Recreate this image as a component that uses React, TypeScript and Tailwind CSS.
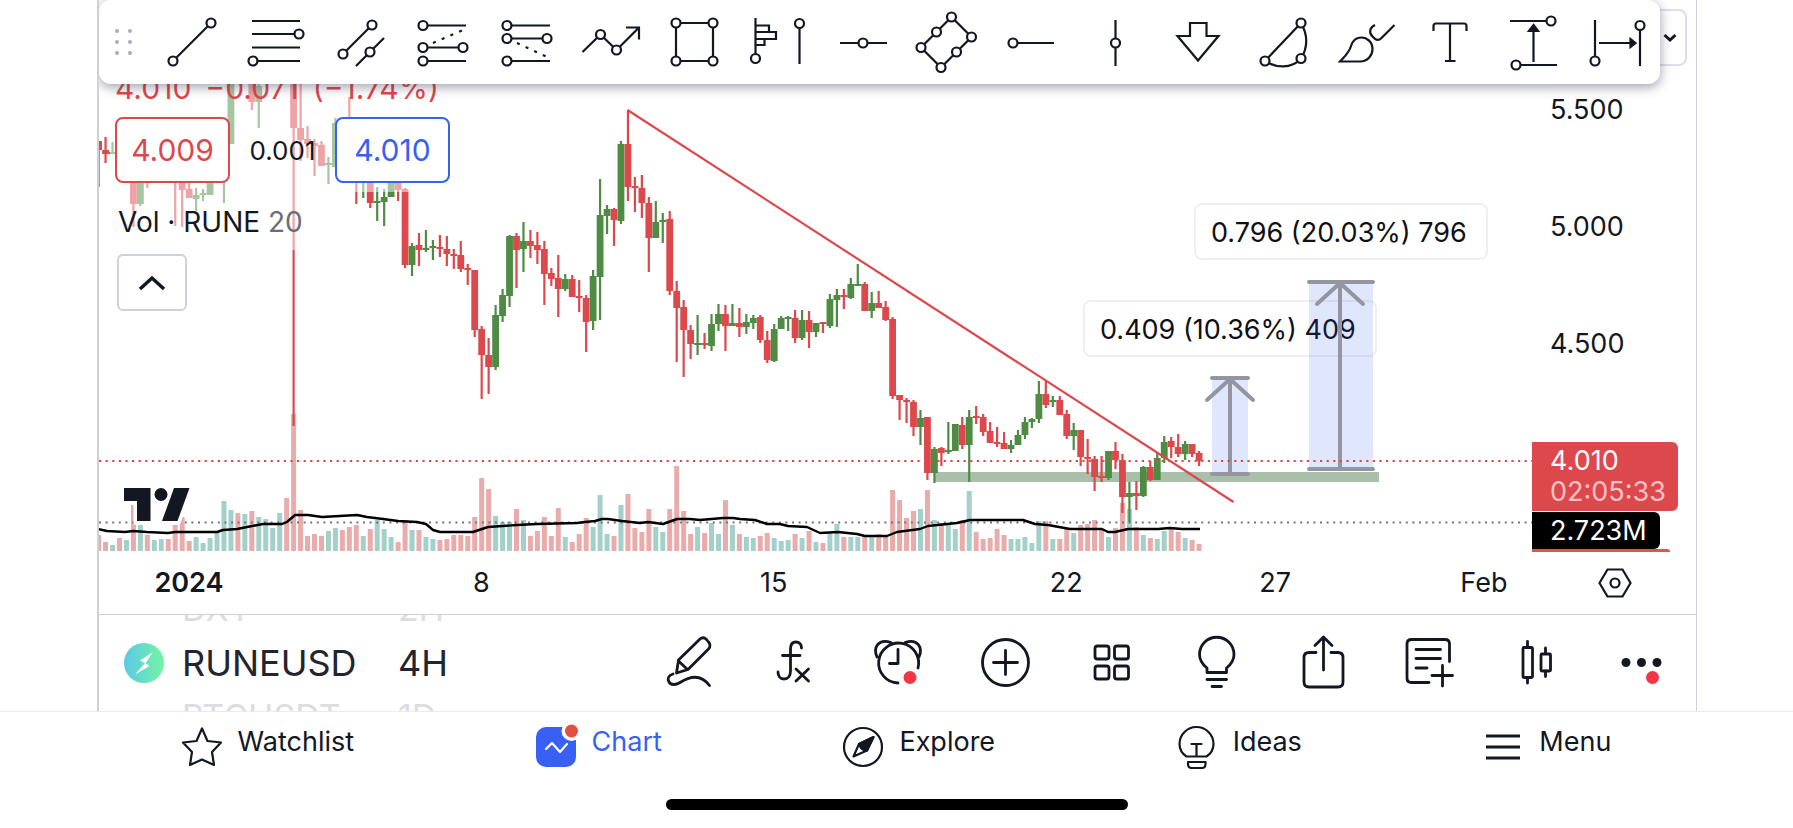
import type { ReactNode } from "react";

// [up, high, low, body top, body bottom, volume], one entry per 4h candle
type Candle = [number, number, number, number, number, number];

const candles: Candle[] = [
  [0, 141, 187, 141, 150, 16], [0, 137, 163, 150, 154, 9], [1, 142, 154, 152, 154, 6], [0, 148, 170, 152, 160, 13],
  [1, 140, 170, 150, 160, 11], [0, 150, 227, 158, 204, 46], [1, 150, 206, 158, 204, 26], [0, 140, 188, 152, 170, 16],
  [1, 145, 175, 155, 170, 11], [1, 140, 170, 150, 160, 12], [0, 140, 176, 150, 165, 12], [0, 150, 226, 160, 180, 26],
  [0, 160, 227, 170, 190, 34], [0, 180, 198, 189, 198, 10], [1, 188, 211, 195, 199, 14], [1, 189, 201, 193, 195, 8],
  [1, 170, 195, 180, 195, 13], [1, 150, 182, 160, 180, 19], [1, 130, 203, 140, 170, 50], [1, 60, 144, 60, 144, 41],
  [0, 50, 80, 60, 75, 38], [1, 50, 80, 60, 75, 37], [0, 60, 110, 70, 102, 40], [1, 60, 128, 86, 102, 34],
  [1, 50, 80, 60, 75, 32], [1, 40, 80, 50, 70, 23], [1, 40, 80, 50, 70, 38], [0, 40, 80, 50, 70, 53],
  [0, 60, 426, 70, 128, 137], [0, 83, 161, 128, 140, 41], [0, 126, 158, 139, 144, 15], [0, 139, 176, 143, 146, 17],
  [0, 141, 166, 145, 166, 15], [1, 157, 184, 163, 165, 20], [1, 118, 167, 123, 167, 23], [0, 122, 160, 125, 150, 21],
  [0, 97, 180, 140, 160, 24], [0, 150, 204, 160, 176, 26], [1, 150, 198, 160, 176, 15], [0, 170, 208, 178, 203, 22],
  [1, 187, 221, 201, 203, 31], [1, 189, 226, 197, 202, 22], [1, 175, 197, 180, 197, 14], [0, 176, 201, 180, 190, 9],
  [0, 188, 268, 189, 265, 31], [1, 243, 276, 246, 265, 21], [0, 233, 266, 245, 250, 21], [1, 230, 252, 248, 250, 14],
  [1, 240, 260, 246, 248, 12], [0, 235, 257, 247, 249, 11], [0, 236, 266, 249, 254, 12], [0, 249, 269, 254, 256, 16],
  [0, 241, 272, 255, 269, 16], [0, 264, 285, 268, 270, 15], [0, 270, 337, 270, 330, 34], [0, 326, 399, 329, 355, 73],
  [0, 338, 394, 355, 367, 62], [1, 305, 370, 315, 367, 35], [1, 289, 322, 295, 316, 29], [1, 235, 307, 236, 296, 29],
  [0, 233, 288, 236, 250, 42], [1, 222, 272, 241, 249, 31], [0, 230, 258, 241, 246, 15], [0, 232, 264, 245, 250, 20],
  [0, 241, 305, 249, 274, 34], [0, 268, 286, 273, 279, 15], [0, 255, 317, 278, 289, 43], [1, 274, 291, 279, 289, 14],
  [0, 275, 297, 279, 297, 9], [0, 280, 312, 296, 298, 17], [0, 295, 352, 298, 322, 33], [1, 270, 330, 276, 321, 24],
  [1, 179, 320, 215, 277, 56], [1, 205, 234, 209, 216, 17], [0, 208, 246, 209, 220, 15], [1, 141, 224, 144, 221, 46],
  [0, 110, 201, 144, 187, 57], [0, 177, 212, 186, 188, 23], [0, 175, 218, 188, 203, 19], [0, 197, 272, 203, 238, 42],
  [1, 201, 238, 222, 238, 24], [1, 213, 243, 220, 222, 19], [0, 211, 295, 219, 291, 42], [0, 281, 362, 291, 308, 85],
  [0, 300, 377, 307, 330, 40], [0, 325, 359, 330, 344, 17], [1, 315, 355, 343, 345, 24], [0, 333, 349, 343, 345, 18],
  [1, 314, 351, 324, 346, 28], [1, 304, 331, 314, 324, 17], [0, 305, 351, 314, 326, 51], [1, 304, 326, 323, 326, 26],
  [0, 308, 337, 323, 327, 17], [1, 314, 334, 322, 327, 14], [1, 315, 329, 318, 323, 13], [0, 315, 343, 317, 340, 15],
  [0, 331, 363, 340, 360, 18], [1, 324, 362, 329, 361, 13], [1, 316, 329, 318, 329, 10], [1, 316, 331, 317, 319, 11],
  [0, 310, 343, 318, 338, 17], [1, 310, 340, 320, 338, 13], [0, 311, 348, 320, 332, 20], [1, 323, 337, 323, 332, 9],
  [0, 322, 333, 322, 324, 8], [1, 294, 328, 299, 326, 18], [1, 289, 327, 295, 300, 27], [0, 289, 309, 295, 297, 14],
  [1, 278, 299, 284, 298, 14], [1, 264, 286, 284, 286, 14], [0, 282, 311, 284, 311, 16], [1, 292, 318, 303, 311, 14],
  [0, 291, 308, 303, 308, 17], [0, 301, 321, 307, 320, 14], [0, 317, 399, 319, 396, 61], [0, 395, 420, 395, 400, 51],
  [0, 398, 423, 400, 402, 33], [0, 400, 436, 402, 427, 40], [1, 410, 445, 418, 427, 42], [0, 417, 480, 417, 473, 61],
  [1, 447, 483, 449, 473, 31], [0, 447, 466, 448, 453, 28], [1, 422, 454, 450, 452, 27], [1, 424, 451, 424, 451, 22],
  [0, 417, 449, 425, 445, 31], [1, 410, 482, 417, 445, 60], [0, 406, 424, 416, 418, 19], [0, 414, 436, 417, 432, 12],
  [0, 422, 443, 431, 443, 13], [0, 427, 447, 442, 444, 22], [0, 432, 449, 443, 449, 16], [1, 440, 453, 445, 449, 12],
  [1, 430, 445, 435, 445, 12], [1, 417, 439, 422, 435, 14], [1, 418, 428, 419, 422, 8], [1, 381, 423, 394, 419, 30],
  [0, 381, 408, 394, 405, 30], [1, 396, 407, 400, 402, 12], [0, 396, 415, 400, 415, 12], [0, 410, 439, 414, 436, 22],
  [1, 423, 450, 430, 436, 18], [0, 430, 466, 430, 457, 26], [0, 439, 474, 457, 459, 27], [0, 456, 491, 459, 477, 31],
  [0, 456, 482, 476, 478, 22], [1, 451, 480, 451, 478, 14], [0, 442, 469, 451, 460, 23], [0, 454, 513, 460, 497, 48],
  [1, 482, 522, 493, 497, 42], [0, 481, 510, 493, 496, 24], [1, 466, 497, 467, 496, 16], [0, 461, 481, 467, 480, 13],
  [1, 453, 480, 458, 480, 12], [1, 436, 463, 442, 458, 20], [0, 437, 458, 441, 447, 22], [0, 434, 457, 447, 454, 19],
  [1, 441, 460, 444, 454, 13], [0, 444, 457, 444, 454, 11], [0, 451, 466, 453, 461, 7],
];

const candleX = (i: number) => 98.6 + i * 6.965;

const volumeAverage =
  "98,529 107,531 125,532 133,531 147,532 168,533 175,532 217,532 223,530 237,529 263,524 282,524 287,522 295,515 308,515 322,517 357,515 367,517 383,519 398,521 417,522 426,524 433,530 440,532 473,532 488,527 517,525 537,524 577,523 585,522 595,521 602,519 608,519 622,521 640,523 648,522 663,524 677,519 690,519 700,520 723,518 733,518 740,519 755,520 767,524 780,524 788,526 807,527 820,533 838,532 857,534 865,536 887,536 897,532 920,529 928,526 957,523 970,520 1023,520 1035,524 1048,525 1070,529 1102,529 1108,532 1115,532 1128,529 1158,529 1170,528 1182,529 1200,529";

function Ring({ x, y }: { x: number; y: number }) {
  return <circle cx={x} cy={y} r="4.5" fill="#fff" />;
}

const drawingTools: { name: string; art: ReactNode }[] = [
  { name: "Trend line", art: <><path d="M23 61 61 23" /><Ring x={23} y={61} /><Ring x={61} y={23} /></> },
  {
    name: "Fib retracement",
    art: <><path d="M18 21H66M18 34H65M18 47.5H66M19 61H66" /><Ring x={65} y={34} /><Ring x={19} y={61} /></>,
  },
  {
    name: "Parallel channel",
    art: <><path d="M25 54 54 25M38 66 66 38" /><Ring x={25} y={54} /><Ring x={54} y={25} /><Ring x={52} y={52} /></>,
  },
  {
    name: "Long position",
    art: (
      <>
        <path d="M21 25.5H64M21 47.5H60M21 61H64" />
        <path d="M31 43 61 30" strokeDasharray="3 6.5" />
        <Ring x={21} y={25.5} /><Ring x={21} y={47.5} /><Ring x={61} y={47.5} /><Ring x={21} y={61} />
      </>
    ),
  },
  {
    name: "Short position",
    art: (
      <>
        <path d="M21 25.5H64M21 38.5H60M21 61H64" />
        <path d="M31 43 61 57" strokeDasharray="3 6.5" />
        <Ring x={21} y={25.5} /><Ring x={21} y={38.5} /><Ring x={61} y={38.5} /><Ring x={21} y={61} />
      </>
    ),
  },
  {
    name: "Arrow path",
    art: <><path d="M13.5 52 31.5 34.5 47.5 50 70 27.5M57 27.5H70V39.5" /><Ring x={31.5} y={34.5} /><Ring x={47.5} y={50} /></>,
  },
  {
    name: "Rectangle",
    art: <><path d="M23 23H60V61H23Z" /><Ring x={23} y={23} /><Ring x={60} y={23} /><Ring x={23} y={61} /><Ring x={60} y={61} /></>,
  },
  {
    name: "Volume profile",
    art: (
      <>
        <path d="M18.5 18V54M18.5 25.5H32V32M18.5 32H39V39H18.5M27.5 39V45H18.5M62.5 28V64" />
        <Ring x={18.5} y={58.5} /><Ring x={62.5} y={23.5} />
      </>
    ),
  },
  { name: "Horizontal line", art: <><path d="M19 43H66" /><Ring x={42} y={43} /></> },
  {
    name: "Rotated rectangle",
    art: (
      <>
        <path d="M46.5 17 66.5 37 36 67.5 16 47.5Z" />
        <Ring x={46.5} y={17} /><Ring x={66.5} y={37} /><Ring x={51.5} y={52} /><Ring x={36} y={67.5} /><Ring x={16} y={47.5} /><Ring x={31.5} y={32} />
      </>
    ),
  },
  { name: "Horizontal ray", art: <><path d="M24 43H65" /><Ring x={24} y={43} /></> },
  { name: "Vertical line", art: <><path d="M42.5 20V66" /><Ring x={42.5} y={43} /></> },
  { name: "Arrow marker", art: <path d="M33 23H49.5V36H61.5L41 60.5 20.5 36H33Z" /> },
  {
    name: "Arc",
    art: <><path d="M24 61 60 23C67 35 67 47 60 59C50 69 35 68 24 61Z" /><Ring x={24} y={61} /><Ring x={60} y={23} /><Ring x={60} y={58.5} /></>,
  },
  {
    name: "Brush",
    art: <path d="M16 61.5H36C44 61.5 48.5 55 48.5 49C48.5 42 43 37.5 37.5 37.5C32 37.5 28.5 41 27 46C25 53 21 56 16 61.5ZM51 25C45 28 45 33 48.5 36.5C52 40.5 54.5 41 57.5 38L70.5 25" />,
  },
  { name: "Text", art: <path d="M25.5 31V26Q25.5 23.5 28 23.5H56Q58.5 23.5 58.5 26V31M42 23.5V61M37 61H47.5" /> },
  {
    name: "Price range",
    art: (
      <>
        <path d="M18 21H59M24 65H65M41.5 62V28" /><path d="M41.5 25 46 31H37Z" fill="currentColor" />
        <Ring x={59} y={21} /><Ring x={24} y={65} />
      </>
    ),
  },
  {
    name: "Date range",
    art: (
      <>
        <path d="M19 20V57M64 26V66M23 43H56" /><path d="M59.5 43 54.5 39V47Z" fill="currentColor" />
        <Ring x={19} y={61} /><Ring x={64} y={25.5} />
      </>
    ),
  },
];

const chartActions: { name: string; art: ReactNode }[] = [
  {
    name: "Draw",
    art: (
      <path d="M17.5 40 19.5 27 40.5 6.5Q44 3 47.5 6.5L49.5 9Q52.5 12.5 49.5 16L29 36.5ZM19.5 28 28.5 36.5M14 41C9.5 42 8 46 10 49C12 52.5 17 52 21 49.5C31 43 42 41 50.5 52.5" />
    ),
  },
  {
    name: "Indicators",
    art: (
      <path d="M36.5 15C36.5 11 34 9 31 9C27 9 25.5 12 25.5 16V38C25.5 43 23 46 19 46C15 46 13 43 13 39M17.5 22.5H35M31 36 43.5 48M43.5 36 31 48" />
    ),
  },
  {
    name: "Alerts",
    art: (
      <>
        <path d="M48 35A20 20 0 1 0 28 50M28 16.5V30.5H19.5M7 24C3 15 8 5 21 9.5M49 24C53 15 48 5 35 9.5" />
        <circle cx="40" cy="44.5" r="6.5" fill="#f23645" stroke="none" />
      </>
    ),
  },
  { name: "Add", art: <><circle cx="29.5" cy="29.5" r="23" /><path d="M17.5 29.5H41.5M29.5 17.5V41.5" /></> },
  {
    name: "Layouts",
    art: (
      <>
        <rect x="13" y="13" width="14" height="13" rx="2.5" /><rect x="32.5" y="13" width="14" height="13" rx="2.5" />
        <rect x="13" y="33" width="14" height="13" rx="2.5" /><rect x="32.5" y="33" width="14" height="13" rx="2.5" />
      </>
    ),
  },
  {
    name: "Publish idea",
    art: <path d="M19 39.5V35C14 31 11.5 27 11.5 21.5A17.2 17.2 0 0 1 46 21.5C46 27 43.5 31 38.5 35V39.5ZM19 46.5H38.5M24 53.5H33.5" />,
  },
  {
    name: "Share",
    art: <path d="M22 19.5H15Q10 19.5 10 24.5V49Q10 54 15 54H44Q49 54 49 49V24.5Q49 19.5 44 19.5H37M29.5 37V4.5M21 12.5 29.5 4 38 12.5" />,
  },
  {
    name: "Add note",
    art: <path d="M50.5 28.5V11Q50.5 6.5 46 6.5H12.5Q8 6.5 8 11V45Q8 49.5 12.5 49.5H30M17 16.5H41.5M17 25.5H41.5M17 35H28M43.5 32.5V53M33 42.5H53.5" />,
  },
  {
    name: "Chart type",
    art: (
      <>
        <rect x="18" y="14.5" width="9.5" height="30" rx="1" /><rect x="36" y="21" width="9.5" height="17" rx="1" />
        <path d="M22.5 8.5V14M22.5 45V50M40.5 15V20.5M40.5 38V43.5" />
      </>
    ),
  },
  {
    name: "More",
    art: (
      <>
        <g fill="currentColor" stroke="none"><circle cx="15" cy="29.5" r="4.5" /><circle cx="30.5" cy="29.5" r="4.5" /><circle cx="46" cy="29.5" r="4.5" /></g>
        <circle cx="41.5" cy="44.5" r="6.5" fill="#f23645" stroke="none" />
      </>
    ),
  },
];

const tabs: { name: string; active?: boolean; art: ReactNode }[] = [
  { name: "Watchlist", art: <path d="M20 1.5 25.5 14 39 15.5 30 25 32 38 20 32.5 8 38 10 25 1 15.5 14.5 14Z" /> },
  {
    name: "Chart",
    active: true,
    art: (
      <>
        <rect width="40" height="40" rx="10" fill="#3860f4" stroke="none" />
        <path d="M10 22 16 16 24 25 31 17" stroke="#fff" />
        <circle cx="35.5" cy="4" r="10" fill="#fff" stroke="none" /><circle cx="35.5" cy="4" r="6.5" fill="#e2503f" stroke="none" />
      </>
    ),
  },
  {
    name: "Explore",
    art: (
      <>
        <circle cx="20" cy="20" r="19" />
        <path d="M30.5 10 16 17 10.5 29.5 24 23.5Z" />
        <path d="M30.5 10 16 17 18 21 22 24 24 23.5Z" fill="currentColor" />
      </>
    ),
  },
  {
    name: "Ideas",
    art: <path d="M9.5 29.5C5 26.500 2.500 22 2.500 17A17 17 0 0 1 36.500 17C36.500 22 34 26.500 29.500 29.500ZM14.500 17H24.500M19.500 17V29M11 35H28.500V37Q28.500 41 25 41H14.500Q11 41 11 37Z" />,
  },
  { name: "Menu", art: <path d="M3 9H37M3 20H37M3 31H37" strokeWidth="3" strokeLinecap="butt" /> },
];

// day labels, "span" is the distance in days to the next one
const timeTicks = [
  { label: "2024", span: 7, bold: true },
  { label: "8", span: 7 },
  { label: "15", span: 7 },
  { label: "22", span: 5 },
  { label: "27", span: 5 },
  { label: "Feb", span: 1.15 },
];

function PriceLabel({ x, y, width, text }: { x: number; y: number; width: number; text: string }) {
  return (
    <g>
      <rect x={x} y={y} width={width} height="55" rx="7" fill="#fff" stroke="#efeff1" strokeWidth="2" />
      <text x={x + 16} y={y + 38} className="fill-[#0f0f14] text-[27px]">{text}</text>
    </g>
  );
}

function RangeArrow({ left, right, mid, top, bottom }: { left: number; right: number; mid: number; top: number; bottom: number }) {
  return (
    <g>
      <rect x={left} y={top} width={right - left} height={bottom - top} fill="#2f55e8" fillOpacity="0.15" />
      <path
        d={`M${left} ${top}H${right}M${left} ${bottom}H${right}M${mid} ${bottom}V${top}M${mid - 23} ${top + 22}L${mid} ${top + 1}L${mid + 23} ${top + 22}`}
        fill="none" stroke="#9396a0" strokeWidth="4" strokeLinecap="round" strokeLinejoin="round"
      />
    </g>
  );
}

function ChartCanvas() {
  return (
    <svg viewBox="99 0 1433 552" preserveAspectRatio="xMaxYMin slice" className="block h-[552px] w-full" role="img" aria-label="RUNEUSD 4H candles">
      {candles.map(([up, , , , , volume], i) => (
        <rect key={i} x={candleX(i) - 2.5} y={551 - volume} width="5" height={volume} fill={up ? "#a3d0c9" : "#eaabab"} />
      ))}
      <rect x="935" y="472" width="444" height="10" fill="#a9bfa9" />
      {candles.map(([up, high, low, top, bottom], i) => (
        <g key={i} fill={up ? "#4d8c42" : "#dd484c"}>
          <rect x={candleX(i) - 1.1} y={high} width="2.2" height={low - high} />
          <rect x={candleX(i) - 3.4} y={top} width="6.8" height={bottom - top} />
        </g>
      ))}
      <path d="M99 522.5H1532" stroke="#73757e" strokeWidth="2" strokeDasharray="2 4.6" />
      <polyline points={volumeAverage} fill="none" stroke="#000" strokeWidth="2.4" strokeLinejoin="round" />
      <path d="M627.5 110 1233.5 502" stroke="#dd484c" strokeWidth="2.2" />

      <PriceLabel x={1195} y={204} width={292} text="0.796 (20.03%) 796" />
      <PriceLabel x={1084} y={301} width={292} text="0.409 (10.36%) 409" />
      <RangeArrow left={1212} right={1248} mid={1230} top={378} bottom={474} />
      <RangeArrow left={1309} right={1373} mid={1340} top={282} bottom={469} />
      <path d="M99 461H1532" stroke="#dd484c" strokeWidth="2.2" strokeDasharray="2.2 4.4" />

      <g fill="#131722" stroke="#fff" strokeWidth="7" paintOrder="stroke">
        <path d="M124 488H150.5V521H137V501H124Z" />
        <path d="M174 488H189.5L177.5 521H162Z" />
        <circle cx="161" cy="494.5" r="6.5" />
      </g>
    </svg>
  );
}

function Legend() {
  return (
    <div className="absolute left-[11px] top-16 flex flex-col items-start">
      <div className="flex h-32 flex-col bg-white/50 pl-[5px]">
        <p className="flex h-[53px] gap-[14px] pt-[7px] text-3xl leading-[34px] text-[#dd484c]">
          <span>4.010</span>
          <span>−0.071</span>
          <span>(−1.74%)</span>
        </p>
        <div className="flex items-center">
          <button className="h-[66px] w-[115px] rounded-lg border-2 border-[#dd484c] bg-white text-3xl text-[#dd484c]">4.009</button>
          <span className="w-[105px] text-center text-[26px] text-[#131722]">0.001</span>
          <button className="h-[66px] w-[115px] rounded-lg border-2 border-[#3860f4] bg-white text-3xl text-[#3860f4]">4.010</button>
        </div>
      </div>
      <p className="h-[58px] bg-white/50 pl-2 pr-1 text-[28px] leading-[60px] text-[#131722]">
        Vol · RUNE <span className="text-[#6a6d78]">20</span>
      </p>
      <button aria-label="Collapse legend" className="ml-[7px] mt-1 flex h-[57px] w-[70px] items-center justify-center rounded-md border-2 border-[#ced1dc] bg-white">
        <svg width="28" height="16" viewBox="0 0 28 16" fill="none" stroke="#131722" strokeWidth="3.5"><path d="M2 14 14 3 26 14" /></svg>
      </button>
    </div>
  );
}

function DrawingToolbar() {
  return (
    <div className="absolute left-0 right-9 top-0 flex h-[84px] rounded-xl bg-white text-[#131722] shadow-[0_3px_12px_rgba(40,40,70,0.45)]">
      <div className="flex w-[51px] items-center pl-4">
        <svg width="18" height="28" viewBox="0 0 18 28" fill="#abadb8">
          {[3, 14, 25].map((y) => (
            <g key={y}><circle cx="2" cy={y} r="2" /><circle cx="15" cy={y} r="2" /></g>
          ))}
        </svg>
      </div>
      {drawingTools.map((tool) => (
        <button key={tool.name} aria-label={tool.name} className="flex min-w-0 flex-1 justify-center">
          <svg width="84" height="84" viewBox="0 0 84 84" className="shrink-0" fill="none" stroke="currentColor" strokeWidth="2.2">{tool.art}</svg>
        </button>
      ))}
    </div>
  );
}

function PriceAxis() {
  return (
    <div className="flex w-[164px] flex-col items-start pt-[51px] text-[27px] text-[#131722]">
      {["5.500", "5.000", "4.500"].map((price) => (
        <span key={price} className="h-[117px] pl-[18px] leading-[117px]">{price}</span>
      ))}
      <div className="mt-10 flex h-[69px] w-[146px] flex-col rounded-r-md bg-[#dd484c] pl-[18px] pt-[3px] leading-[31px] text-white">
        <span>4.010</span>
        <span className="text-[#f8c3c4]">02:05:33</span>
      </div>
      <div className="mt-px h-[37px] w-[128px] rounded-r-md bg-black pl-[18px] leading-[37px] text-white">2.723M</div>
      <div className="h-[3px] w-[138px] rounded-tr-full bg-[#e2534d]" />
    </div>
  );
}

function TimeAxis() {
  return (
    <div className="flex h-[63px] items-center border-b border-[#ccd1da] text-[27px] text-[#131722]">
      <div className="flex flex-1 pl-[90px]">
        {timeTicks.map((tick) => (
          <div key={tick.label} className="flex w-0" style={{ flexGrow: tick.span }}>
            <span className={tick.bold ? "-translate-x-1/2 font-semibold" : "-translate-x-1/2"}>{tick.label}</span>
          </div>
        ))}
      </div>
      <div className="flex w-[164px] pl-[66px]">
        <button aria-label="Chart settings">
          <svg width="34" height="30" viewBox="0 0 34 30" fill="none" stroke="currentColor" strokeWidth="2.2">
            <path d="M9.5 1.5H24.5L32.5 15 24.5 28.5H9.5L1.5 15Z" /><circle cx="17" cy="15" r="4.5" />
          </svg>
        </button>
      </div>
    </div>
  );
}

function Wheel({ items, className }: { items: string[]; className: string }) {
  return (
    <div className={`flex h-24 flex-col justify-center overflow-hidden ${className}`}>
      <span className="h-[54px] shrink-0 text-[34px] leading-[54px] text-[#dcdde0]">{items[0]}</span>
      <button className="h-[54px] shrink-0 text-left text-4xl leading-[54px] text-[#22242f]">{items[1]}</button>
      <span className="h-[54px] shrink-0 text-[34px] leading-[54px] text-[#dcdde0]">{items[2]}</span>
    </div>
  );
}

function SymbolBar() {
  return (
    <div className="flex h-24 items-center pr-0.5">
      <svg width="40" height="40" viewBox="0 0 40 40" className="ml-[25px] shrink-0">
        <defs>
          <linearGradient id="rune" x1="0" x2="1"><stop stopColor="#5cc8e8" /><stop offset="1" stopColor="#74f5a2" /></linearGradient>
        </defs>
        <circle cx="20" cy="20" r="20" fill="url(#rune)" />
        <path d="M29 9 16 17.5 21 20 11 31.5 25.5 23 21.5 20Z" fill="#fff" />
      </svg>
      <Wheel items={["DXY", "RUNEUSD", "BTCUSDT"]} className="ml-[18px] w-[216px]" />
      <Wheel items={["2H", "4H", "1D"]} className="w-[238px]" />
      <div className="flex flex-1 text-[#131722]">
        {chartActions.map((action) => (
          <button key={action.name} aria-label={action.name} className="flex flex-1 justify-center">
            <svg width="60" height="60" viewBox="0 0 60 60" fill="none" stroke="currentColor" strokeWidth="2.8" strokeLinecap="round" strokeLinejoin="round">{action.art}</svg>
          </button>
        ))}
      </div>
    </div>
  );
}

function TabBar() {
  return (
    <nav className="flex flex-1 flex-col border-t border-[#ebebee]">
      <div className="flex items-start justify-evenly pt-[15px]">
        {tabs.map((tab) => (
          <a key={tab.name} href="#" className={tab.active ? "flex gap-4 text-[#3860f4]" : "flex gap-4 text-[#131722]"}>
            <svg width="40" height="40" viewBox="0 0 40 40" className="overflow-visible" fill="none" stroke="currentColor" strokeWidth="2.2" strokeLinejoin="round" strokeLinecap="round">{tab.art}</svg>
            <span className="text-[27px] leading-[30px]">{tab.name}</span>
          </a>
        ))}
      </div>
      <div className="mx-auto mt-8 h-[11px] w-[462px] rounded-full bg-black" />
    </nav>
  );
}

export default function App() {
  return (
    <div className="flex min-h-screen flex-col bg-white font-['Inter','Liberation_Sans',sans-serif]">
      <main className="ml-[97px] mr-24 border-l-2 border-r border-[#ccd1da]">
        <section className="relative flex overflow-hidden">
          <div className="min-w-0 flex-1"><ChartCanvas /></div>
          <PriceAxis />
          <Legend />
          <button aria-label="Currency" className="absolute right-[9px] top-[9px] flex h-[57px] w-[60px] items-center justify-end rounded-lg border-2 border-[#dcdfe9] bg-white pr-2">
            <svg width="14" height="10" viewBox="0 0 14 10" fill="none" stroke="#131722" strokeWidth="3"><path d="M1.5 2 7 7 12.5 2" /></svg>
          </button>
          <DrawingToolbar />
        </section>
        <TimeAxis />
        <SymbolBar />
      </main>
      <TabBar />
    </div>
  );
}
